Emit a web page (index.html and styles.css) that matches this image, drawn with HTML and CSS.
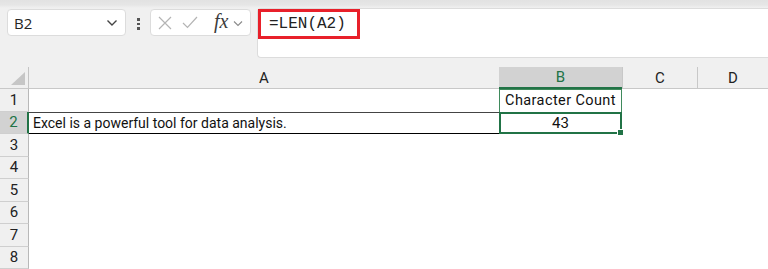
FILE: index.html
```html
<!DOCTYPE html>
<html>

<head>
  <title>LEN formula</title>
  <link rel="stylesheet" href="styles.css">
</head>

<body>
  <div class="ribbon-edge"></div>

  <div class="formula-row">
    <div class="name-box">
      <span class="name-text">B2</span>
      <svg class="chevron" width="12" height="8" viewBox="0 0 12 8">
        <path d="M1.5 1.5 L6 6 L10.5 1.5" fill="none" stroke="#444" stroke-width="1.4"/>
      </svg>
    </div>

    <div class="dots">
      <span class="dot"></span>
      <span class="dot"></span>
      <span class="dot"></span>
    </div>

    <div class="fx-box">
      <svg class="fx-icon" width="14" height="14" viewBox="0 0 14 14">
        <path d="M1 1 L13 13 M13 1 L1 13" stroke="#b4b4b4" stroke-width="1.2" fill="none"/>
      </svg>
      <svg class="fx-icon" width="16" height="13" viewBox="0 0 16 13">
        <path d="M1 7 L5.5 11.5 L15 1" stroke="#b4b4b4" stroke-width="1.2" fill="none"/>
      </svg>
      <span class="fx-text">fx</span>
      <svg class="fx-chevron" width="10" height="7" viewBox="0 0 10 7">
        <path d="M1 1.5 L5 5.5 L9 1.5" fill="none" stroke="#8a8a8a" stroke-width="1.1"/>
      </svg>
    </div>

    <div class="formula-bar">
      <span class="formula-mark">=LEN(A2)</span>
    </div>
  </div>

  <div class="sheet">
    <div class="corner"><span class="corner-tri"></span></div>
    <div class="col-head">A</div>
    <div class="col-head col-active">B</div>
    <div class="col-head col-sep">C</div>
    <div class="col-head col-sep">D</div>

    <div class="row-head">1</div>
    <div class="cell"></div>
    <div class="cell cell-b1">Character Count</div>
    <div class="cell"></div>
    <div class="cell"></div>

    <div class="row-head row-active">2</div>
    <div class="cell cell-a2">Excel is a powerful tool for data analysis.</div>
    <div class="cell cell-b2">43<span class="fill-handle"></span></div>
    <div class="cell"></div>
    <div class="cell"></div>

    <div class="row-head">3</div>
    <div class="cell blank-row"></div>
    <div class="row-head">4</div>
    <div class="cell blank-row"></div>
    <div class="row-head">5</div>
    <div class="cell blank-row"></div>
    <div class="row-head">6</div>
    <div class="cell blank-row"></div>
    <div class="row-head">7</div>
    <div class="cell blank-row"></div>
    <div class="row-head">8</div>
    <div class="cell blank-row"></div>
  </div>
</body>

</html>
```

FILE: styles.css
```css
body{
    margin: 0;
    background-color: #f0f0f0;
    font-family: Roboto, "Liberation Sans", sans-serif;
    overflow: hidden;
}

.ribbon-edge{
    height: 8px;
    background: linear-gradient(#e2e2e2, #e6e6e6 60%, #f0f0f0);
}

.formula-row{
    display: flex;
    align-items: flex-start;
    height: 59px;
    padding-top: 1px;
    box-sizing: border-box;
}

.name-box{
    margin-left: 7px;
    width: 119px;
    height: 27px;
    box-sizing: border-box;
    background-color: white;
    border: 1px solid #dcdcdc;
    border-radius: 4px;
    display: flex;
    align-items: center;
    justify-content: space-between;
    padding: 0 7px 0 6px;
}

.name-text{
    font-family: "Open Sans", sans-serif;
    font-size: 15px;
    color: #262626;
}

.chevron{
    margin-top: 1px;
}

.dots{
    margin-left: 11px;
    margin-top: 9px;
    display: flex;
    flex-direction: column;
    gap: 2px;
}

.dot{
    width: 3px;
    height: 2.5px;
    background-color: #555;
}

.fx-box{
    margin-left: 10px;
    width: 101px;
    height: 27px;
    box-sizing: border-box;
    background-color: white;
    border: 1px solid #dcdcdc;
    border-radius: 4px;
    display: flex;
    align-items: center;
    padding-left: 7px;
}

.fx-icon{
    margin-right: 10px;
}

.fx-text{
    font-family: "Liberation Serif", serif;
    font-style: italic;
    font-size: 20px;
    color: #3c3c3c;
    margin-left: 6px;
    margin-top: -3px;
}

.fx-chevron{
    margin-left: 5px;
    margin-top: 1px;
}

.formula-bar{
    margin-left: 6px;
    flex: 1;
    height: 50px;
    box-sizing: border-box;
    background-color: white;
    border: 1px solid #dcdcdc;
    border-right: none;
    border-radius: 4px 0 0 4px;
    margin-top: -1px;
}

.formula-mark{
    display: inline-block;
    width: 102px;
    height: 30px;
    box-sizing: border-box;
    border: 3px solid #e8202a;
    font-family: "Liberation Mono", monospace;
    font-size: 16px;
    line-height: 24px;
    padding-left: 8px;
    color: #222;
}

.sheet{
    display: grid;
    grid-template-columns: 29px 470px 123px 75px 1fr;
    grid-template-rows: 22px repeat(8, 22.5px);
    background-color: white;
    font-size: 14px;
    color: #111;
}

.corner{
    background-color: #f0f0f0;
    border-right: 1px solid #c4c4c4;
    border-bottom: 1px solid #c8c8c8;
    position: relative;
}

.corner-tri{
    position: absolute;
    right: 3px;
    bottom: 3px;
    width: 0;
    height: 0;
    border-left: 14px solid transparent;
    border-bottom: 13px solid #c6c6c6;
}

.col-head{
    background-color: #f0f0f0;
    border-bottom: 1px solid #c8c8c8;
    display: flex;
    align-items: center;
    justify-content: center;
    font-size: 15px;
    color: #222;
}

.col-active{
    background-color: #d2d2d2;
    color: #217346;
    border-bottom: 2px solid #217346;
}

.col-sep{
    border-left: 1px solid #c8c8c8;
}

.row-head{
    background-color: #f0f0f0;
    border-right: 1px solid #b8b8b8;
    border-bottom: 1px solid #cfcfcf;
    display: flex;
    align-items: center;
    justify-content: center;
    font-size: 15px;
    color: #222;
}

.row-active{
    background-color: #d2d2d2;
    color: #217346;
    border-right: 2px solid #217346;
}

.cell{
    display: flex;
    align-items: center;
    white-space: nowrap;
}

.blank-row{
    grid-column: 2 / 6;
}

.cell-a2{
    border-top: 1px solid #444;
    border-bottom: 1px solid #000;
    padding-left: 4px;
}

.cell-b1{
    justify-content: center;
    border: 1px solid #3f8a5c;
    border-bottom: none;
    font-size: 14.5px;
    letter-spacing: 0.4px;
}

.cell-b2{
    justify-content: center;
    border: 2px solid #217346;
    position: relative;
    font-size: 15px;
}

.fill-handle{
    position: absolute;
    right: -4px;
    bottom: -4px;
    width: 5px;
    height: 5px;
    background-color: #217346;
    border: 1px solid white;
}
```
